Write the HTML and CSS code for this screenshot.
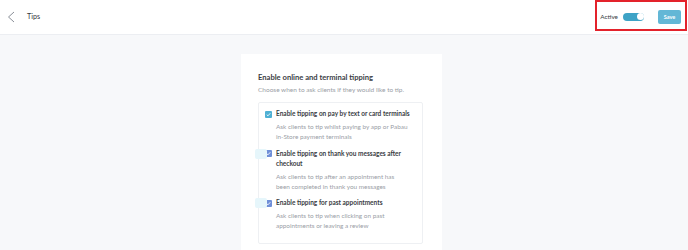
FILE: index.html
```html
<!DOCTYPE html>
<html>
<head>
<meta charset="utf-8">
<link rel="stylesheet" href="styles.css">
</head>
<body>
<div class="page">
  <header class="topbar">
    <div class="left">
      <svg class="back" width="8" height="12" viewBox="0 0 8 12"><polyline points="7,1 1.5,6 7,11" fill="none" stroke="#8a8f98" stroke-width="1"/></svg>
      <span class="title">Tips</span>
    </div>
    <div class="right">
      <span class="active-label">Active</span>
      <span class="switch"><span class="knob"></span></span>
      <button class="save">Save</button>
    </div>
    <div class="annotation"></div>
  </header>
  <main class="main">
    <section class="card">
      <h2 class="card-title">Enable online and terminal tipping</h2>
      <p class="card-sub">Choose when to ask clients if they would like to tip.</p>
      <div class="options">
        <div class="option">
          <span class="check teal"><svg viewBox="0 0 8 8"><polyline points="2,4.2 3.4,5.5 6,2.6" fill="none" stroke="#fff" stroke-width="1"/></svg></span>
          <div class="text">
            <div class="label">Enable tipping on pay by text or card terminals</div>
            <div class="desc">Ask clients to tip whilst paying by app or Pabau <span class="nw">in-Store payment</span> terminals</div>
          </div>
        </div>
        <div class="option">
          <span class="check blue wave"><svg viewBox="0 0 8 8"><polyline points="2,4.2 3.4,5.5 6,2.6" fill="none" stroke="#fff" stroke-width="1"/></svg></span>
          <div class="text">
            <div class="label">Enable tipping on thank you messages after checkout</div>
            <div class="desc">Ask clients to tip after an appointment has <span class="nw">been completed</span> in thank you messages</div>
          </div>
        </div>
        <div class="option">
          <span class="check blue wave"><svg viewBox="0 0 8 8"><polyline points="2,4.2 3.4,5.5 6,2.6" fill="none" stroke="#fff" stroke-width="1"/></svg></span>
          <div class="text">
            <div class="label">Enable tipping for past appointments</div>
            <div class="desc">Ask clients to tip when clicking on past appointments or leaving a review</div>
          </div>
        </div>
      </div>
    </section>
  </main>
</div>
</body>
</html>
```
FILE: styles.css
```css
* { box-sizing: border-box; }
html, body { margin: 0; padding: 0; }
body {
  font-family: "Lato", "Liberation Sans", sans-serif;
  color: #3a3d44;
  background: #f7f8fa;
  width: 688px;
  height: 250px;
  overflow: hidden;
}
.page { height: 250px; display: flex; flex-direction: column; }
.topbar {
  position: relative;
  height: 35px;
  background: #fff;
  border-bottom: 1px solid #eceef2;
  display: flex;
  align-items: center;
  justify-content: space-between;
  padding: 0 7px 1px 7px;
}
.left { display: flex; align-items: center; gap: 12px; }
.back { display: block; margin-top: 1px; }
.title { font-size: 7.2px; color: #33363c; }
.right { display: flex; align-items: center; }
.active-label { font-size: 6.4px; color: #3a3d44; margin-right: 5px; }
.switch {
  position: relative;
  width: 21px; height: 8px;
  border-radius: 4px;
  background: #3ea3c6;
  margin-right: 14px;
}
.knob {
  position: absolute;
  right: 0.5px; top: 0.5px;
  width: 7px; height: 7px;
  border-radius: 50%;
  background: #fff;
}
.save {
  width: 23px; height: 14px;
  border: none;
  border-radius: 2px;
  background: #63b7d6;
  color: #fff;
  font-family: inherit;
  font-size: 5.6px;
  font-weight: 700;
  padding: 0;
}
.annotation {
  position: absolute;
  left: 595px; top: 0;
  width: 92px; height: 31px;
  border: 2px solid #e3222b;
}
.main { flex: 1; padding: 19px 0 0 241px; }
.card {
  width: 201px;
  height: 100%;
  background: #fff;
  padding: 18px 19px 0 17px;
}
.card-title {
  margin: 0;
  font-size: 7.6px;
  font-weight: 700;
  line-height: 10px;
  color: #3a3d44;
}
.card-sub {
  margin: 3px 0 0 0;
  font-size: 6.5px;
  line-height: 10px;
  color: #9a9ea6;
}
.options {
  margin-top: 7px;
  border: 1px solid #eef0f3;
  border-radius: 2px;
  padding: 6px 4px 12px 6px;
  display: flex;
  flex-direction: column;
  gap: 6.5px;
}
.option { display: flex; gap: 4px; }
.check {
  position: relative;
  flex: none;
  width: 7px; height: 7px;
  margin-top: 1.5px;
  border-radius: 1px;
}
.check svg { position: relative; display: block; width: 7px; height: 7px; z-index: 1; }
.check.teal { background: #4fb0d4; }
.check.blue { background: #6f8fd8; }
.check.wave::before {
  content: "";
  position: absolute;
  left: -10px; top: -1.5px;
  width: 12px; height: 10px;
  border-radius: 2px;
  background: #e6f6fb;
}
.text { flex: 1; }
.label { font-size: 6.5px; font-weight: 700; line-height: 10px; color: #3a3d44; }
.desc { margin-top: 3px; font-size: 6.4px; line-height: 10px; color: #9a9ea6; }
.nw { white-space: nowrap; }
```
